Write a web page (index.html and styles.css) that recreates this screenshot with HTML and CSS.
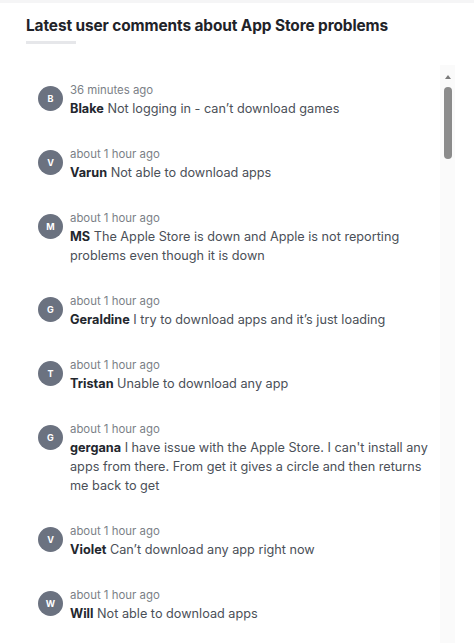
FILE: index.html
```html
<!DOCTYPE html>
<html lang="en">
<head>
  <meta charset="UTF-8" />
  <title>App Store problems - user comments</title>
  <link rel="stylesheet" href="styles.css">
</head>
<body>
  <div class="card">
    <h2 class="title">Latest user comments about App Store problems</h2>
    <div class="title-rule"></div>

    <div class="feed">
      <ul class="comments">
        <li class="comment">
          <span class="avatar">B</span>
          <div class="body">
            <div class="time">36 minutes ago</div>
            <p class="text"><b>Blake</b> Not logging in - can’t download games</p>
          </div>
        </li>
        <li class="comment">
          <span class="avatar">V</span>
          <div class="body">
            <div class="time">about 1 hour ago</div>
            <p class="text"><b>Varun</b> Not able to download apps</p>
          </div>
        </li>
        <li class="comment">
          <span class="avatar">M</span>
          <div class="body">
            <div class="time">about 1 hour ago</div>
            <p class="text"><b>MS</b> The Apple Store is down and Apple is not reporting problems even though it is down</p>
          </div>
        </li>
        <li class="comment">
          <span class="avatar">G</span>
          <div class="body">
            <div class="time">about 1 hour ago</div>
            <p class="text"><b>Geraldine</b> I try to download apps and it’s just loading</p>
          </div>
        </li>
        <li class="comment">
          <span class="avatar">T</span>
          <div class="body">
            <div class="time">about 1 hour ago</div>
            <p class="text"><b>Tristan</b> Unable to download any app</p>
          </div>
        </li>
        <li class="comment">
          <span class="avatar">G</span>
          <div class="body">
            <div class="time">about 1 hour ago</div>
            <p class="text"><b>gergana</b> I have issue with the Apple Store. I can't install any apps from there. From get it gives a circle and then returns me back to get</p>
          </div>
        </li>
        <li class="comment">
          <span class="avatar">V</span>
          <div class="body">
            <div class="time">about 1 hour ago</div>
            <p class="text"><b>Violet</b> Can’t download any app right now</p>
          </div>
        </li>
        <li class="comment">
          <span class="avatar">W</span>
          <div class="body">
            <div class="time">about 1 hour ago</div>
            <p class="text"><b>Will</b> Not able to download apps</p>
          </div>
        </li>
      </ul>

      <div class="scrollbar">
        <span class="arrow"></span>
        <span class="thumb"></span>
      </div>
    </div>
  </div>
</body>
</html>
```

FILE: styles.css
```css
html, body {
  margin: 0;
  height: 100%;
  background: #fff;
}
body {
  font-family: Inter, "Noto Sans", sans-serif;
  overflow: hidden;
}
.card {
  border-top: 3px solid #f5f5f6;
  padding: 13px 19px 0 26px;
  height: 100%;
  box-sizing: border-box;
  display: flex;
  flex-direction: column;
}
.title {
  margin: 0;
  font-size: 15.4px;
  line-height: 20px;
  font-weight: 700;
  color: #1f2329;
  letter-spacing: -0.1px;
}
.title-rule {
  width: 50px;
  height: 3px;
  margin-top: 5px;
  background: #e6e7ea;
}
.feed {
  display: flex;
  flex: 1;
  margin-top: 21px;
  min-height: 0;
}
.comments {
  flex: 1;
  list-style: none;
  margin: 0;
  padding: 16px 10px 0 12px;
}
.comment {
  display: flex;
  gap: 7px;
  margin-bottom: 27px;
}
.avatar {
  flex: none;
  width: 25px;
  height: 25px;
  margin-top: 5px;
  border-radius: 50%;
  background: #6b7280;
  color: #fff;
  font-size: 9px;
  font-weight: 700;
  display: flex;
  align-items: center;
  justify-content: center;
}
.body {
  flex: 1;
}
.time {
  font-size: 11.4px;
  line-height: 18px;
  color: #7b7f87;
}
.text {
  margin: 0;
  font-size: 12.7px;
  line-height: 19px;
  color: #4b5058;
}
.text b {
  color: #23272e;
}
.scrollbar {
  flex: none;
  width: 15px;
  background: #fafafa;
  display: flex;
  flex-direction: column;
  align-items: center;
}
.arrow {
  margin-top: 10px;
  width: 0;
  height: 0;
  border-left: 3px solid transparent;
  border-right: 3px solid transparent;
  border-bottom: 4px solid #7a7a7a;
}
.thumb {
  margin-top: 8px;
  width: 8px;
  height: 72px;
  border-radius: 4px;
  background: #8b8b8b;
}
```
